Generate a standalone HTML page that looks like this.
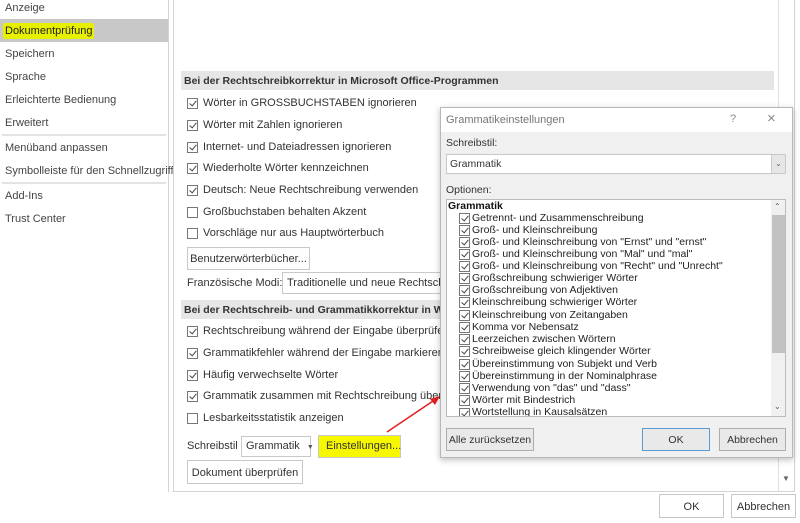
<!DOCTYPE html>
<html><head><meta charset="utf-8"><style>
*{margin:0;padding:0;box-sizing:border-box}
body{width:800px;height:523px;background:#fff;font-family:"Liberation Sans",sans-serif;font-size:11px;color:#333;position:relative;overflow:hidden}
div{white-space:nowrap}
.a{position:absolute}
.nav{left:0;top:0;width:169px;height:492px;border-right:1px solid #d4d4d4}
.ni{position:absolute;left:5px;font-size:11px;color:#444}
.sep{position:absolute;left:2px;width:164px;height:2px;background:#e3e3e3}
.cb{position:absolute;width:11px;height:11px;border:1px solid #777;background:#fff}
.cb.c::after{content:"";position:absolute;left:3px;top:0px;width:3px;height:6px;border:solid #444;border-width:0 1.3px 1.3px 0;transform:rotate(40deg)}
.hdr{position:absolute;left:181px;width:593px;height:19px;background:#e6e6e6;font-weight:bold;font-size:10.5px;padding:4px 0 0 3px;color:#333}
.btn{position:absolute;border:1px solid #adadad;background:#e9e9e9;text-align:center;color:#333}
.wbtn{position:absolute;border:1px solid #c8c8c8;background:#fff;text-align:center;color:#333}
.li{position:absolute;font-size:10.5px;color:#222}
</style></head><body>
<div class="a nav"></div>
<div class="a" style="left:0;top:19px;width:168px;height:23px;background:#c8c8c8"></div>
<div class="a" style="left:3px;top:23px;width:91px;height:16px;background:#e6f000;border-radius:2px"></div>
<div class="ni" style="top:2px">Anzeige</div>
<div class="ni" style="top:25px;color:#222">Dokumentprüfung</div>
<div class="ni" style="top:48px">Speichern</div>
<div class="ni" style="top:71px">Sprache</div>
<div class="ni" style="top:94px">Erleichterte Bedienung</div>
<div class="ni" style="top:117px">Erweitert</div>
<div class="sep" style="top:134px"></div>
<div class="ni" style="top:142px">Menüband anpassen</div>
<div class="ni" style="top:165px">Symbolleiste für den Schnellzugriff</div>
<div class="sep" style="top:182px"></div>
<div class="ni" style="top:190px">Add-Ins</div>
<div class="ni" style="top:213px">Trust Center</div>

<div class="a" style="left:173px;top:0;width:622px;height:492px;border:1px solid #d4d4d4;border-top:none"></div>
<div class="a" style="left:778px;top:0;width:16px;height:491px;background:#fff;border-left:1px solid #e0e0e0"></div>
<div class="a" style="left:782px;top:474px;font-size:8px;color:#666">▼</div>

<div class="hdr" style="top:71px">Bei der Rechtschreibkorrektur in Microsoft Office-Programmen</div>
<div class="cb c" style="left:187px;top:98px"></div><div class="a" style="left:203px;top:97px">Wörter in GROSSBUCHSTABEN ignorieren</div>
<div class="cb c" style="left:187px;top:120px"></div><div class="a" style="left:203px;top:119px">Wörter mit Zahlen ignorieren</div>
<div class="cb c" style="left:187px;top:142px"></div><div class="a" style="left:203px;top:141px">Internet- und Dateiadressen ignorieren</div>
<div class="cb c" style="left:187px;top:163px"></div><div class="a" style="left:203px;top:162px">Wiederholte Wörter kennzeichnen</div>
<div class="cb c" style="left:187px;top:185px"></div><div class="a" style="left:203px;top:184px">Deutsch: Neue Rechtschreibung verwenden</div>
<div class="cb" style="left:187px;top:207px"></div><div class="a" style="left:203px;top:206px">Großbuchstaben behalten Akzent</div>
<div class="cb" style="left:187px;top:228px"></div><div class="a" style="left:203px;top:227px">Vorschläge nur aus Hauptwörterbuch</div>
<div class="btn" style="left:187px;top:247px;width:123px;height:23px;padding-top:5px;background:#fdfdfd;border-color:#c8c8c8">Benutzerwörterbücher...</div>
<div class="a" style="left:187px;top:277px">Französische Modi:</div>
<div class="a" style="left:282px;top:272px;width:160px;height:22px;border:1px solid #c8c8c8;padding:4px 0 0 4px;overflow:hidden">Traditionelle und neue Rechtschre</div>
<div class="hdr" style="top:300px">Bei der Rechtschreib- und Grammatikkorrektur in Wo</div>
<div class="cb c" style="left:187px;top:326px"></div><div class="a" style="left:203px;top:325px">Rechtschreibung während der Eingabe überprüfen</div>
<div class="cb c" style="left:187px;top:348px"></div><div class="a" style="left:203px;top:347px">Grammatikfehler während der Eingabe markieren</div>
<div class="cb c" style="left:187px;top:370px"></div><div class="a" style="left:203px;top:369px">Häufig verwechselte Wörter</div>
<div class="cb c" style="left:187px;top:391px"></div><div class="a" style="left:203px;top:390px">Grammatik zusammen mit Rechtschreibung überprü</div>
<div class="cb" style="left:187px;top:413px"></div><div class="a" style="left:203px;top:412px">Lesbarkeitsstatistik anzeigen</div>
<div class="a" style="left:187px;top:440px">Schreibstil</div>
<div class="a" style="left:241px;top:436px;width:70px;height:21px;border:1px solid #c8c8c8;padding:3px 0 0 4px">Grammatik <span style="font-size:7px;color:#555;margin-left:4px">▼</span></div>
<div class="wbtn" style="left:318px;top:435px;width:83px;height:23px"></div>
<div class="a" style="left:319px;top:436px;width:81px;height:21px;background:#f7f700"></div>
<div class="a" style="left:326px;top:440px;color:#333">Einstellungen...</div>
<div class="wbtn" style="left:187px;top:460px;width:116px;height:24px;padding-top:6px">Dokument überprüfen</div>

<div class="wbtn" style="left:659px;top:494px;width:65px;height:24px;padding-top:6px">OK</div>
<div class="wbtn" style="left:731px;top:494px;width:65px;height:24px;padding-top:6px">Abbrechen</div>

<svg class="a" style="left:380px;top:390px" width="65" height="50"><line x1="7" y1="42" x2="56" y2="9" stroke="#e02020" stroke-width="1.5"/><polygon points="60,6 50,9 55,15" fill="#e02020"/></svg>

<div class="a" style="left:440px;top:107px;width:353px;height:351px;background:#f0f0f0;border:1px solid #b8b8b8;box-shadow:0 2px 6px rgba(0,0,0,.25)"></div>
<div class="a" style="left:441px;top:108px;width:351px;height:24px;background:#fff"></div>
<div class="a" style="left:446px;top:114px;color:#777;font-size:11px">Grammatikeinstellungen</div>
<div class="a" style="left:730px;top:113px;color:#888">?</div>
<div class="a" style="left:767px;top:110px;color:#888;font-size:15px">×</div>
<div class="a" style="left:446px;top:137px;font-size:10.5px">Schreibstil:</div>
<div class="a" style="left:446px;top:154px;width:340px;height:20px;background:#fff;border:1px solid #c8c8c8;padding:3px 0 0 3px;font-size:10.5px">Grammatik</div>
<div class="a" style="left:771px;top:155px;width:14px;height:18px;background:#e6e6e6;border-left:1px solid #ccc;font-size:8px;color:#666;text-align:center;padding-top:4px">⌄</div>
<div class="a" style="left:446px;top:184px;font-size:10.5px">Optionen:</div>
<div class="a" style="left:446px;top:199px;width:340px;height:218px;background:#fff;border:1px solid #bcbcbc"></div>
<div class="a" style="left:771px;top:200px;width:14px;height:216px;background:#f0f0f0"></div>
<div class="a" style="left:772px;top:215px;width:13px;height:138px;background:#c2c2c2"></div>
<div class="a" style="left:774px;top:202px;font-size:8px;color:#555">⌃</div>
<div class="a" style="left:774px;top:402px;font-size:8px;color:#555">⌄</div>
<div class="a" style="left:448px;top:200px;font-size:10.5px;font-weight:bold;color:#111">Grammatik</div>
<div style="position:absolute;left:447px;top:200px;width:323px;height:216px;overflow:hidden">
<div class="cb c" style="left:12px;top:13px"></div><div class="li" style="left:25px;top:12px">Getrennt- und Zusammenschreibung</div>
<div class="cb c" style="left:12px;top:25px"></div><div class="li" style="left:25px;top:24px">Groß- und Kleinschreibung</div>
<div class="cb c" style="left:12px;top:37px"></div><div class="li" style="left:25px;top:36px">Groß- und Kleinschreibung von "Ernst" und "ernst"</div>
<div class="cb c" style="left:12px;top:49px"></div><div class="li" style="left:25px;top:48px">Groß- und Kleinschreibung von "Mal" und "mal"</div>
<div class="cb c" style="left:12px;top:61px"></div><div class="li" style="left:25px;top:60px">Groß- und Kleinschreibung von "Recht" und "Unrecht"</div>
<div class="cb c" style="left:12px;top:73px"></div><div class="li" style="left:25px;top:72px">Großschreibung schwieriger Wörter</div>
<div class="cb c" style="left:12px;top:85px"></div><div class="li" style="left:25px;top:84px">Großschreibung von Adjektiven</div>
<div class="cb c" style="left:12px;top:97px"></div><div class="li" style="left:25px;top:96px">Kleinschreibung schwieriger Wörter</div>
<div class="cb c" style="left:12px;top:110px"></div><div class="li" style="left:25px;top:109px">Kleinschreibung von Zeitangaben</div>
<div class="cb c" style="left:12px;top:122px"></div><div class="li" style="left:25px;top:121px">Komma vor Nebensatz</div>
<div class="cb c" style="left:12px;top:134px"></div><div class="li" style="left:25px;top:133px">Leerzeichen zwischen Wörtern</div>
<div class="cb c" style="left:12px;top:146px"></div><div class="li" style="left:25px;top:145px">Schreibweise gleich klingender Wörter</div>
<div class="cb c" style="left:12px;top:159px"></div><div class="li" style="left:25px;top:158px">Übereinstimmung von Subjekt und Verb</div>
<div class="cb c" style="left:12px;top:171px"></div><div class="li" style="left:25px;top:170px">Übereinstimmung in der Nominalphrase</div>
<div class="cb c" style="left:12px;top:183px"></div><div class="li" style="left:25px;top:182px">Verwendung von "das" und "dass"</div>
<div class="cb c" style="left:12px;top:195px"></div><div class="li" style="left:25px;top:194px">Wörter mit Bindestrich</div>
<div class="cb c" style="left:12px;top:208px"></div><div class="li" style="left:25px;top:206px">Wortstellung in Kausalsätzen</div>
</div>
<div class="btn" style="left:446px;top:428px;width:88px;height:23px;padding-top:5px;font-size:10.5px">Alle zurücksetzen</div>
<div class="btn" style="left:642px;top:428px;width:68px;height:23px;padding-top:5px;border-color:#5b9bd5;font-size:10.5px">OK</div>
<div class="btn" style="left:719px;top:428px;width:67px;height:23px;padding-top:5px;font-size:10.5px">Abbrechen</div>
</body></html>
